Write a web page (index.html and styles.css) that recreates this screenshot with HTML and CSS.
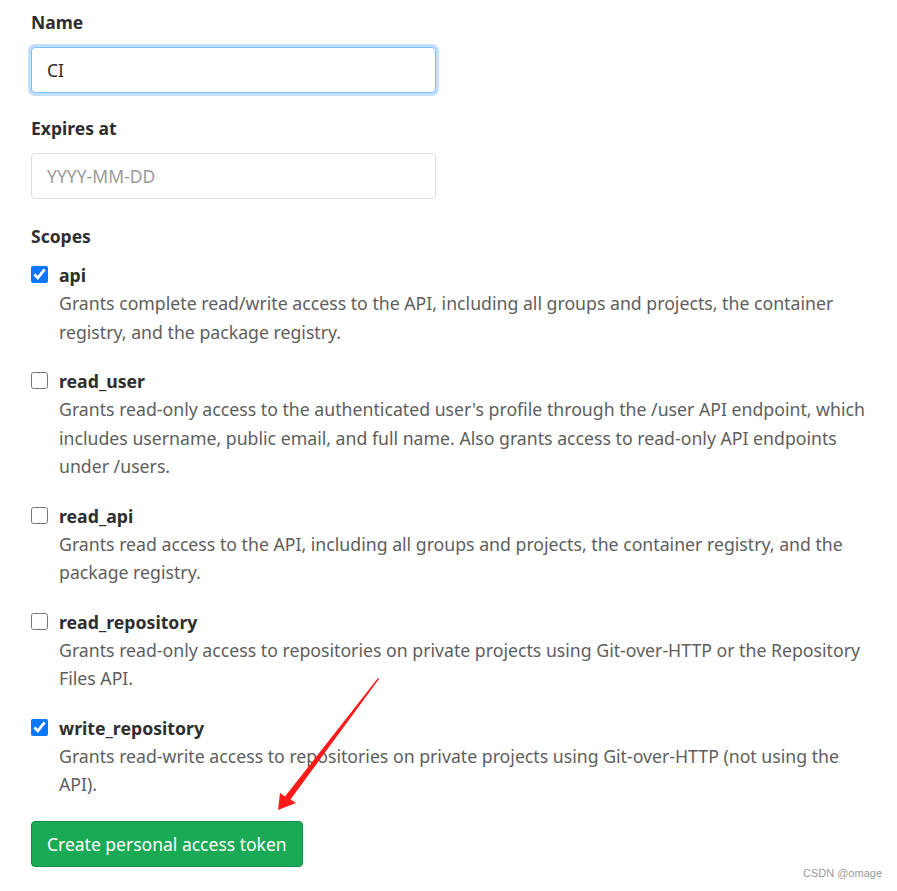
FILE: index.html
```html
<!DOCTYPE html>
<html>
<head>
<meta charset="utf-8">
<link rel="stylesheet" href="styles.css">
</head>
<body>
<form class="form">
  <div class="group">
    <label class="label" for="name">Name</label>
    <input class="input focus" id="name" type="text" value="CI">
  </div>
  <div class="group">
    <label class="label" for="exp">Expires at</label>
    <input class="input" id="exp" type="text" placeholder="YYYY-MM-DD">
  </div>
  <div class="scopes">
    <div class="label">Scopes</div>
    <div class="scope">
      <input class="check" type="checkbox" checked>
      <div class="scope-body">
        <div class="scope-name">api</div>
        <div class="scope-desc">Grants complete read/write access to the API, including all groups and projects, the container registry, and the package registry.</div>
      </div>
    </div>
    <div class="scope">
      <input class="check" type="checkbox">
      <div class="scope-body">
        <div class="scope-name">read_user</div>
        <div class="scope-desc">Grants read-only access to the authenticated user's profile through the /user API endpoint, which includes username, public email, and full name. Also grants access to read-only API endpoints under /users.</div>
      </div>
    </div>
    <div class="scope">
      <input class="check" type="checkbox">
      <div class="scope-body">
        <div class="scope-name">read_api</div>
        <div class="scope-desc">Grants read access to the API, including all groups and projects, the container registry, and the package registry.</div>
      </div>
    </div>
    <div class="scope">
      <input class="check" type="checkbox">
      <div class="scope-body">
        <div class="scope-name">read_repository</div>
        <div class="scope-desc">Grants read-only access to repositories on private projects using Git-over-HTTP or the Repository Files API.</div>
      </div>
    </div>
    <div class="scope">
      <input class="check" type="checkbox" checked>
      <div class="scope-body">
        <div class="scope-name">write_repository</div>
        <div class="scope-desc">Grants read-write access to repositories on private projects using Git-over-HTTP (not using the API).</div>
      </div>
    </div>
  </div>
  <button class="btn" type="button">Create personal access token</button>
</form>
<svg class="arrow" width="110" height="140" viewBox="0 0 110 140">
  <polygon points="108,2 109,3 20.5,123.5 26,127 8,134 10,117 15,120.5" fill="#ff1a1a"/>
</svg>
<div class="watermark">CSDN @omage</div>
</body>
</html>
```
FILE: styles.css
```css
html, body {
  margin: 0;
  padding: 0;
  background: #fff;
}
body {
  font-family: "Noto Sans", "Open Sans", sans-serif;
  color: #2e2e2e;
  position: relative;
  width: 897px;
  height: 891px;
  overflow: hidden;
}
.form {
  padding: 8px 0 0 31px;
  width: 840px;
}
.group {
  display: flex;
  flex-direction: column;
  margin-bottom: 21px;
}
.label {
  font-weight: 700;
  font-size: 17.5px;
  line-height: 28px;
  margin-bottom: 11px;
}
.input {
  box-sizing: border-box;
  width: 405px;
  height: 46px;
  border: 1px solid #dfdfdf;
  border-radius: 4px;
  padding: 0 15px;
  font-family: inherit;
  font-size: 17.5px;
  color: #2e2e2e;
  outline: none;
}
.input::placeholder {
  color: #9a9a9a;
}
.input.focus {
  border-color: #80bdff;
  box-shadow: 0 0 0 3px #c4dffc;
}
.scopes {
  display: flex;
  flex-direction: column;
  padding-top: 2px;
}
.scopes > .label {
  margin-bottom: 11px;
}
.scope {
  display: flex;
  align-items: flex-start;
  margin-bottom: 21px;
}
.check {
  width: 17px;
  height: 17px;
  margin: 5px 11px 0 0;
  accent-color: #0b77ff;
  flex: none;
}
.scope-body {
  flex: 1;
}
.scope-name {
  font-weight: 700;
  font-size: 17.7px;
  line-height: 28px;
}
.scope-desc {
  font-size: 17.7px;
  line-height: 28.5px;
  color: #5e5e5e;
}
.btn {
  margin-top: 1px;
  height: 46px;
  padding: 0 15px;
  background: #1aaa55;
  border: 1px solid #168f48;
  border-radius: 4px;
  color: #fff;
  font-family: inherit;
  font-size: 17.5px;
}
.arrow {
  position: absolute;
  left: 270px;
  top: 676px;
}
.watermark {
  position: absolute;
  right: 15px;
  top: 867px;
  font-family: "Liberation Sans", sans-serif;
  font-size: 11px;
  color: #9a9a9a;
}
```
